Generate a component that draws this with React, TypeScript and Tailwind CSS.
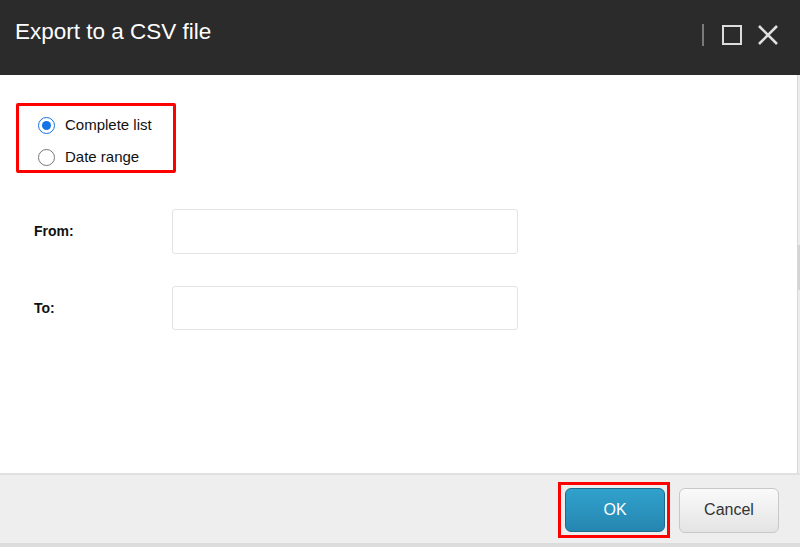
import React from "react";

export default function App() {
  return (
    <div
      className="w-[800px] h-[547px] flex flex-col bg-white overflow-hidden"
      style={{ fontFamily: '"Liberation Sans", Arial, sans-serif' }}
    >
      {/* Header */}
      <div className="h-[75px] shrink-0 bg-[#2b2b2b] flex items-start justify-between">
        <div className="pl-[15px] pt-[17px] text-[22.5px] leading-[30px] text-white">
          Export to a CSV file
        </div>
        <div className="flex items-center pt-[24px] pr-[21px]">
          <div className="w-[2px] h-[22px] bg-[#7a7a7a]" />
          <div className="ml-[18px] w-[20px] h-[20px] border-[2.5px] border-[#dcdcdc]" />
          <svg
            className="ml-[15px]"
            width="22"
            height="22"
            viewBox="0 0 22 22"
            fill="none"
            stroke="#e0e0e0"
            strokeWidth="2.6"
          >
            <path d="M2 2 L20 20 M20 2 L2 20" />
          </svg>
        </div>
      </div>

      {/* Body */}
      <div className="flex-1 flex">
        <div className="flex-1 flex flex-col">
          <div className="pl-[16px] pt-[28px]">
            <div className="w-[160px] h-[70px] border-[3px] border-[#ff0000] rounded-[2px] flex flex-col pl-[19px] pt-[10px] gap-[14px] text-[15px] text-[#111]">
              <label className="flex items-center gap-[10px] leading-[18px]">
                <span className="w-[17px] h-[17px] rounded-full border-[1.5px] border-[#1473e6] flex items-center justify-center">
                  <span className="w-[9px] h-[9px] rounded-full bg-[#1473e6]" />
                </span>
                Complete list
              </label>
              <label className="flex items-center gap-[10px] leading-[18px]">
                <span className="w-[17px] h-[17px] rounded-full border-[1.5px] border-[#777]" />
                Date range
              </label>
            </div>
          </div>

          <div className="pl-[34px] pt-[36px] flex flex-col gap-[32px]">
            <div className="flex items-center">
              <div className="w-[138px] text-[14px] font-bold text-[#111]">From:</div>
              <div className="w-[346px] h-[45px] border border-[#e3e3e3] rounded-[3px] bg-white" />
            </div>
            <div className="flex items-center">
              <div className="w-[138px] text-[14px] font-bold text-[#111]">To:</div>
              <div className="w-[346px] h-[44px] border border-[#e3e3e3] rounded-[3px] bg-white" />
            </div>
          </div>
        </div>
        <div className="w-[3px] shrink-0 flex flex-col bg-[#ececec] border-l border-[#d8d8d8]">
          <div className="h-[170px]" />
          <div className="h-[45px] bg-[#d4d4d4]" />
        </div>
      </div>

      {/* Footer */}
      <div className="h-[74px] shrink-0 bg-[#eeeeee] border-t-2 border-[#e0e0e0] border-b-4 border-b-[#dcdcdc] flex items-center justify-end pr-[21px]">
        <div className="border-[3px] border-[#ff0000] pt-[3px] pb-[3px] pl-[4px] pr-[2px] mt-[2px]">
          <button className="w-[100px] h-[44px] rounded-[6px] border border-[#1e6a8a] bg-gradient-to-b from-[#30a2cd] to-[#2586b0] text-white text-[16px]">
            OK
          </button>
        </div>
        <button className="ml-[9px] mt-[2px] w-[100px] h-[45px] rounded-[6px] border border-[#c8c8c8] bg-gradient-to-b from-[#fafafa] to-[#e4e4e4] text-[#333] text-[16px]">
          Cancel
        </button>
      </div>
    </div>
  );
}
